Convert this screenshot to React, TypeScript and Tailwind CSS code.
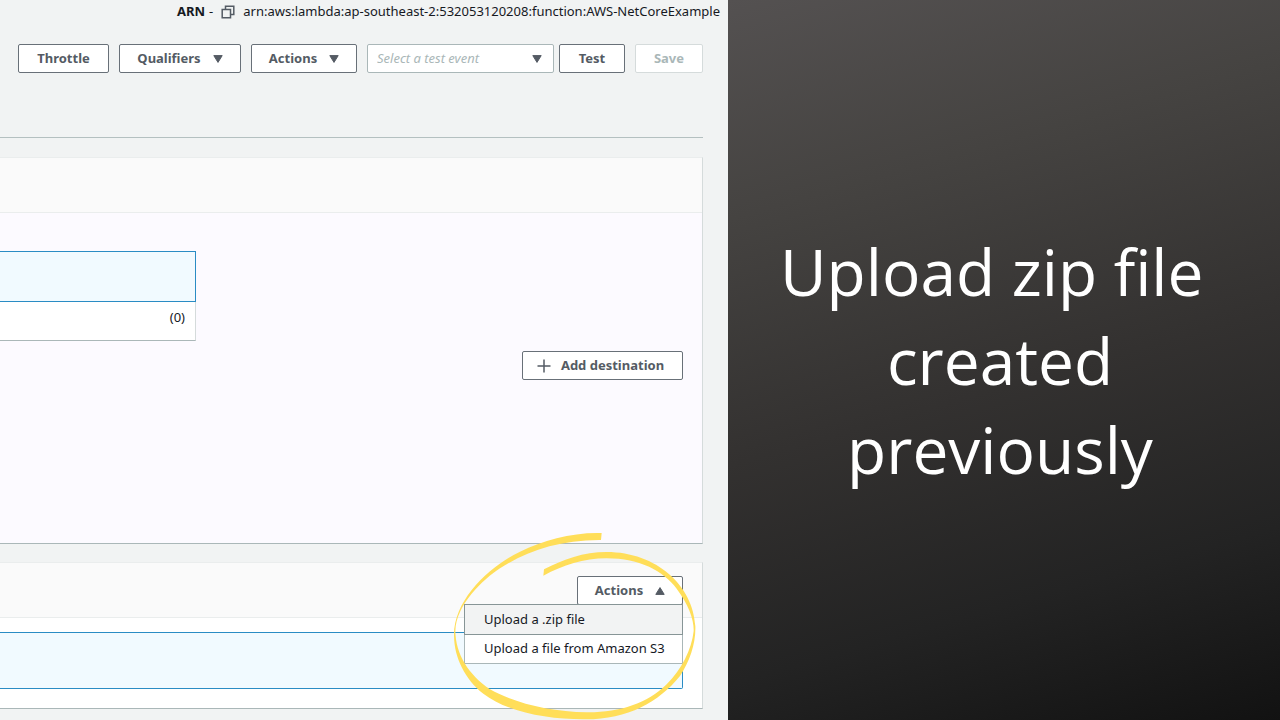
import type { ReactNode } from "react";
import clsx from "clsx";

const TriangleIcon = ({ up = false }: { up?: boolean }) => (
    <svg viewBox="0 0 10 8" className={clsx("h-2 w-2.5 shrink-0", up && "rotate-180")} aria-hidden="true">
        <path d="M0.8 0.6h8.4L5 7.4z" fill="currentColor" stroke="currentColor" strokeLinejoin="round" />
    </svg>
);

const CopyIcon = () => (
    <svg viewBox="0 0 14 14" className="h-3.5 w-3.5" fill="none" stroke="#545b64" strokeWidth="1.5" aria-hidden="true">
        <path d="M4.5 4V1.2h8.3v8.3H10" />
        <path d="M1.2 4.5h8.3v8.3H1.2z" />
    </svg>
);

const PlusIcon = () => (
    <svg viewBox="0 0 14 14" className="h-3.5 w-3.5" fill="none" stroke="currentColor" strokeWidth="1.5" aria-hidden="true">
        <path d="M7 0.5v13M0.5 7h13" />
    </svg>
);

// Hand-drawn marker stroke around the upload menu
const MarkerCircle = () => (
    <svg
        viewBox="0 0 870 600"
        className="pointer-events-none absolute -right-7 -top-[42px] z-20 h-[200px] w-[290px]"
        aria-hidden="true"
    >
        <path
            fill="#ffde59"
            d="M485 36C400 33 310 58 240 92C150 135 40 235 42 345C43 410 75 475 130 518C200 572 320 595 430 595C560 597 655 545 720 465C750 420 768 365 766 315C760 195 650 93 500 93C430 93 370 115 312 145L310 164C370 133 430 112 500 112C600 112 670 150 710 203C745 250 762 295 761 330C755 385 725 445 680 490C620 548 540 575 440 574C330 573 220 545 150 505C85 460 47 400 46 330C48 250 130 175 180 142C260 90 360 56 483 57Z"
        />
    </svg>
);

type ButtonProps = {
    children: ReactNode;
    className?: string;
    disabled?: boolean;
    expanded?: boolean;
};

const Button = ({ children, className, disabled, expanded }: ButtonProps) => (
    <button
        type="button"
        disabled={disabled}
        aria-expanded={expanded}
        className={clsx(
            "flex h-[29px] items-center justify-center rounded-xs border bg-white text-[13px] font-bold",
            disabled ? "border-[#d5dbdb] text-[#aab7b8]" : "border-[#687078] text-[#545b64]",
            className,
        )}
    >
        {children}
    </button>
);

const Toolbar = () => (
    <div className="mt-[22px] flex justify-end gap-2.5 pr-[25px]">
        <Button className="w-[91px]">Throttle</Button>
        <Button className="w-[122px] gap-3">
            Qualifiers <TriangleIcon />
        </Button>
        <Button className="w-[106px] gap-3">
            Actions <TriangleIcon />
        </Button>
        <div className="flex gap-[5px]">
            <div className="relative w-[187px] text-[#545b64]">
                <select
                    aria-label="Test event"
                    className="h-[29px] w-full appearance-none rounded-xs border border-[#aab7b8] bg-white pl-[9px] text-[13px] italic text-[#aab7b8]"
                >
                    <option>Select a test event</option>
                </select>
                <span className="pointer-events-none absolute inset-y-0 right-3 flex items-center">
                    <TriangleIcon />
                </span>
            </div>
            <Button className="w-[66px]">Test</Button>
        </div>
        <Button className="w-[68px]" disabled>
            Save
        </Button>
    </div>
);

const DesignerPanel = () => (
    <section className="mr-[25px] mt-[19px] h-[387px] border-b border-r border-t border-b-[#aab7b8] border-r-[#d5dbdb] border-t-[#eaeded] bg-[#fcfaff]">
        <div className="h-[55px] border-b border-[#eaeded] bg-[#fafafa]" />
        <div className="mt-[38px] w-[196px] border-b border-r border-b-[#aab7b8] border-r-[#d5dbdb] bg-white">
            <div className="-mr-px h-[51px] border-y border-r border-[#2a8cc4] bg-[#f1faff]" />
            <p className="flex h-[38px] justify-end pr-2.5 pt-[5px] text-[13px] leading-5">(0)</p>
        </div>
        <div className="mt-2.5 flex justify-end pr-[19px]">
            <Button className="w-[161px] gap-2.5 pr-1">
                <PlusIcon /> Add destination
            </Button>
        </div>
    </section>
);

const CodePanel = () => (
    <section className="relative mr-[25px] mt-[18px] border-b border-r border-t border-b-[#aab7b8] border-r-[#d5dbdb] border-t-[#eaeded] bg-white">
        <div className="flex h-[55px] justify-end border-b border-[#eaeded] bg-[#fafafa] pr-[19px] pt-[13px]">
            <div className="relative">
                <Button className="w-[106px] gap-3" expanded>
                    Actions <TriangleIcon up />
                </Button>
                <ul className="absolute right-0 top-7 z-10 w-[219px] border border-[#aab7b8] bg-white text-[13px] text-[#16191f]">
                    <li className="-mx-px -mt-px">
                        <button
                            type="button"
                            className="h-[31px] w-full border border-[#879596] bg-[#f2f3f3] pl-[19px] text-left"
                        >
                            Upload a .zip file
                        </button>
                    </li>
                    <li>
                        <button type="button" className="h-7 w-full pl-[19px] text-left">
                            Upload a file from Amazon S3
                        </button>
                    </li>
                </ul>
            </div>
        </div>
        <div className="pb-[19px] pr-[19px] pt-[14px]">
            <div className="h-[57px] rounded-r-xs border-y border-r border-[#2a8cc4] bg-[#f1faff]" />
        </div>
        <MarkerCircle />
    </section>
);

export default function App() {
    return (
        <div className="grid min-h-screen grid-cols-[728fr_552fr] font-['Noto_Sans','Open_Sans',sans-serif]">
            <main className="min-w-0 bg-[#f1f3f3] text-[#16191f]">
                <div className="flex items-center justify-end pr-2 pt-px text-[13px] leading-[21px]">
                    <strong>ARN</strong>
                    <span className="ml-1">-</span>
                    <button type="button" aria-label="Copy ARN" className="mx-2">
                        <CopyIcon />
                    </button>
                    <span className="whitespace-nowrap">
                        arn:aws:lambda:ap-southeast-2:532053120208:function:AWS-NetCoreExample
                    </span>
                </div>
                <Toolbar />
                <hr className="mr-[25px] mt-16 border-[#b4c0c0]" />
                <DesignerPanel />
                <CodePanel />
            </main>
            <aside className="flex items-center justify-center bg-[linear-gradient(164deg,#545151_0%,#454341_25%,#333130_53%,#232323_78%,#121212_100%)] pr-2">
                <h1 className="text-center font-['Open_Sans',sans-serif] text-[64px] leading-[89px] text-white">
                    Upload zip file{"\u00a0"}
                    <br />
                    created
                    <br />
                    previously
                </h1>
            </aside>
        </div>
    );
}
